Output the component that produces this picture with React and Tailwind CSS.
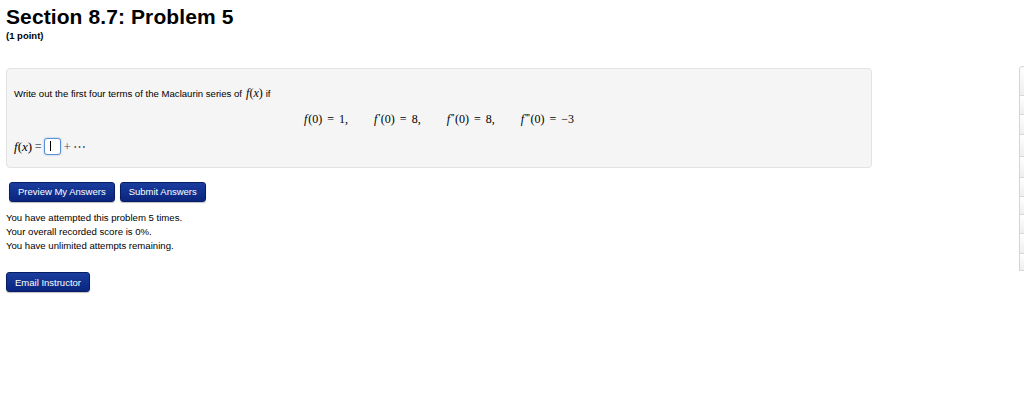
import React from 'react';

const sideRows = [29, 19, 20, 22, 21, 19, 18, 19, 20, 17];

const MathTerm = ({ primes, value }) => (
  <span className="whitespace-nowrap">
    <span className="italic">f</span>
    {primes && (
      <span className="text-[11px] relative top-[-2px] ml-[1px] tracking-[-0.5px]">{primes}</span>
    )}
    <span className="ml-[1px]">(0)</span>
    <span className="mx-[5px]">=</span>
    <span>{value}</span>
  </span>
);

const NavyButton = ({ children }) => (
  <button className="h-[20px] px-[8px] rounded-[3px] border border-[#071d63] bg-gradient-to-b from-[#1a3d9e] to-[#0a257e] text-white text-[9.5px] leading-none shadow-[0_1px_1px_rgba(0,0,0,0.25)]">
    {children}
  </button>
);

export default function App() {
  return (
    <div className="w-[1024px] h-[420px] bg-white overflow-hidden flex font-['Liberation_Sans',Arial,sans-serif] text-black">
      {/* Main problem column */}
      <div className="w-[866px] ml-[6px] shrink-0">
        <h1 className="text-[21px] font-bold leading-none pt-[6px] tracking-[0.1px]">Section 8.7: Problem 5</h1>
        <p className="text-[9.5px] font-bold leading-none mt-[4px]">(1 point)</p>

        {/* Problem body */}
        <div className="mt-[27px] h-[100px] bg-[#f5f5f5] border border-[#e3e3e3] rounded-[4px] px-[7px]">
          <p className="text-[9.6px] leading-none mt-[18px] flex items-baseline">
            Write out the first four terms of the Maclaurin series of
            <span className="font-['Liberation_Serif',serif] text-[12px] ml-[4px]">
              <span className="italic">f</span>(<span className="italic">x</span>)
            </span>
            <span className="ml-[3px]">if</span>
          </p>

          <div className="mt-[14px] flex justify-center gap-[26px] font-['Liberation_Serif',serif] text-[12px] leading-none">
            <MathTerm value="1," />
            <MathTerm primes="'" value="8," />
            <MathTerm primes="''" value="8," />
            <MathTerm primes="'''" value="−3" />
          </div>

          <div className="mt-[13px] flex items-center">
            <span className="font-['Liberation_Serif',serif] text-[13px] leading-none">
              <span className="italic">f</span>(<span className="italic">x</span>)
            </span>
            <span className="text-[11px] text-gray-500 ml-[3px] leading-none">=</span>
            <span className="ml-[2px] w-[17px] h-[17px] bg-white border-[1.5px] border-[#5b8fd6] rounded-[3px] shadow-[0_0_2px_#8db5ea] flex items-center pl-[5px]">
              <span className="w-px h-[10px] bg-black" />
            </span>
            <span className="font-['Liberation_Serif',serif] text-[13px] text-gray-600 ml-[3px] leading-none">+</span>
            <span className="font-['Liberation_Serif',serif] text-[13px] text-gray-600 ml-[2px] leading-none tracking-[1px]">⋯</span>
          </div>
        </div>

        {/* Actions */}
        <div className="mt-[14px] ml-[3px] flex gap-[5px]">
          <NavyButton>Preview My Answers</NavyButton>
          <NavyButton>Submit Answers</NavyButton>
        </div>

        <div className="mt-[9px] text-[9.6px] leading-[14px]">
          <p>You have attempted this problem 5 times.</p>
          <p>Your overall recorded score is 0%.</p>
          <p>You have unlimited attempts remaining.</p>
        </div>

        <div className="mt-[16px]">
          <NavyButton>Email Instructor</NavyButton>
        </div>
      </div>

      {/* Cut-off side panel */}
      <div className="ml-auto mt-[66px] w-[5px] self-start border-l border-t border-[#d4d4d4] rounded-tl-[4px] overflow-hidden">
        {sideRows.map((h, i) => (
          <div
            key={i}
            className="bg-gradient-to-b from-white to-[#eeeeee] border-b border-[#d8d8d8]"
            style={{ height: h }}
          />
        ))}
      </div>
    </div>
  );
}
